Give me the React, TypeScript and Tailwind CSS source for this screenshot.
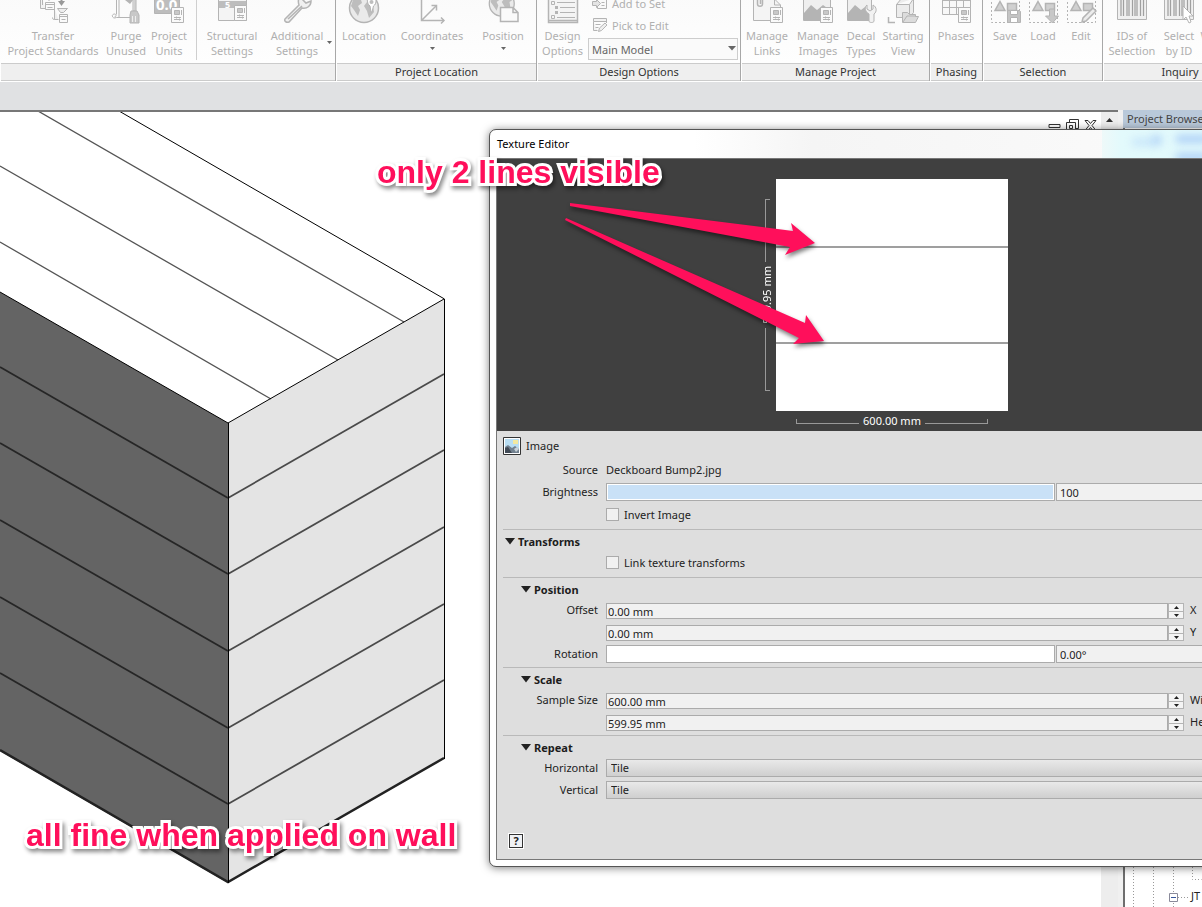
import type { ReactNode } from "react";

const LEFT_FACE_JOINTS = [498, 574, 651, 728, 804];

const PINK = "#ff0f5b";

export default function App() {
  return (
    <div className="relative flex h-screen flex-col overflow-hidden bg-white font-['Noto_Sans','Open_Sans',sans-serif] text-[11px] leading-[15px] text-[#222]">
      <Ribbon />
      <div className="h-7 shrink-0 bg-[#e0e1e3]" />
      <div className="flex min-h-0 flex-1">
        <ModelView />
        <ProjectBrowser />
      </div>
      <TextureEditor />
      <Annotations />
    </div>
  );
}

/* ---------- Ribbon ---------- */

function Ribbon() {
  return (
    <header className="-mt-2 flex h-[90px] shrink-0 border-b border-white bg-linear-to-b from-[#fafafa] to-white">
      <Panel title="" width="w-[336px]">
        <Tool width="w-[106px]" icon={<TransferIcon />} label={["Transfer", "Project Standards"]} />
        <Tool width="w-10" icon={<PurgeIcon />} label={["Purge", "Unused"]} />
        <Tool width="w-[46px]" icon={<UnitsIcon />} label={["Project", "Units"]} />
        <div className="mx-1 w-px bg-[#cfcfcf]" />
        <Tool width="w-[62px]" icon={<StructuralIcon />} label={["Structural", "Settings"]} />
        <Tool width="w-[68px]" icon={<WrenchIcon />} label={["Additional", "Settings"]} />
        <Caret className="mt-[49px] -ml-1" />
      </Panel>
      <Panel title="Project Location" width="w-[201px]">
        <Tool width="w-14" icon={<GlobePinIcon />} label={["Location"]} />
        <Tool width="w-20" icon={<AxesIcon />} label={["Coordinates"]} menu />
        <Tool width="w-[62px]" icon={<GlobePageIcon />} label={["Position"]} menu />
      </Panel>
      <Panel title="Design Options" width="w-[204px]">
        <Tool width="w-[51px]" icon={<ListIcon />} label={["Design", "Options"]} />
        <div className="flex flex-1 flex-col pr-[2px]">
          <SmallTool label="Add to Set" icon={<AddToSetIcon />} />
          <SmallTool label="Pick to Edit" icon={<PickToEditIcon />} />
          <div className="relative mt-0.5">
            <select
              aria-label="Active design option"
              className="h-[22px] w-full appearance-none border border-[#cdcdcd] bg-[#fafafa] pl-[3px] text-[#666]"
            >
              <option>Main Model</option>
            </select>
            <svg className="pointer-events-none absolute top-2 right-0.5" width="8" height="5">
              <path d="M0 0h8L4 4.500z" fill="#666" />
            </svg>
          </div>
        </div>
      </Panel>
      <Panel title="Manage Project" width="w-[189px]">
        <Tool width="w-[52px]" icon={<LinksIcon />} label={["Manage", "Links"]} />
        <Tool width="w-[50px]" icon={<ImagesIcon />} label={["Manage", "Images"]} />
        <Tool width="w-9" icon={<DecalIcon />} label={["Decal", "Types"]} />
        <Tool width="w-12" icon={<StartingIcon />} label={["Starting", "View"]} />
      </Panel>
      <Panel title="Phasing" width="w-[53px]">
        <Tool width="w-[52px]" icon={<PhasesIcon />} label={["Phases"]} />
      </Panel>
      <Panel title="Selection" width="w-[120px]">
        <Tool width="ml-[3px] w-[38px]" icon={<SaveSetIcon />} label={["Save"]} />
        <Tool width="w-[38px]" icon={<LoadSetIcon />} label={["Load"]} />
        <Tool width="w-[38px]" icon={<EditSetIcon />} label={["Edit"]} />
      </Panel>
      <Panel title="Inquiry" width="w-[154px]">
        <Tool width="w-[58px]" icon={<BarcodeIcon />} label={["IDs of", "Selection"]} />
        <Tool width="w-9" icon={<BarcodePickIcon />} label={["Select", "by ID"]} />
        <Tool width="w-14" icon={<BarcodeIcon />} label={["Warnings"]} />
      </Panel>
    </header>
  );
}

function Panel({ title, width, children }: { title: string; width: string; children: ReactNode }) {
  return (
    <section className={`flex shrink-0 flex-col border-r border-[#a8a8a8] ${width}`}>
      <div className="flex h-[71px] pb-[3px]">{children}</div>
      <h2 className="ml-px h-[18px] border-y border-[#cbcbcb] bg-[#efefef] text-center text-[#333]">
        {title}
      </h2>
    </section>
  );
}

interface ToolProps {
  width: string;
  icon: ReactNode;
  label: string[];
  menu?: boolean;
}

function Tool({ width, icon, label, menu }: ToolProps) {
  return (
    <button
      type="button"
      disabled
      className={`flex shrink-0 flex-col items-center whitespace-nowrap text-[#b0b0b0] ${width}`}
    >
      <svg width="32" height="32" viewBox="0 0 32 32" fill="none" stroke="#b4b4b4" className="mb-1">
        {icon}
      </svg>
      {label.map((line) => (
        <span key={line}>{line}</span>
      ))}
      {menu && <Caret className="mt-1" />}
    </button>
  );
}

function SmallTool({ label, icon }: { label: string; icon: ReactNode }) {
  return (
    <button type="button" disabled className="flex h-[22px] items-center gap-1 pl-1 text-[#b0b0b0]">
      <svg width="16" height="16" viewBox="0 0 16 16" fill="none" stroke="#b4b4b4">
        {icon}
      </svg>
      {label}
    </button>
  );
}

function Caret({ className }: { className: string }) {
  return (
    <svg width="5" height="3" className={`shrink-0 ${className}`}>
      <path d="M0 0h5L2.500 3z" fill="#666" />
    </svg>
  );
}

/* ---------- Ribbon icons, all on a 32px grid ---------- */

function Card({ x, y }: { x: number; y: number }) {
  return (
    <g transform={`translate(${x} ${y})`}>
      <path d="M.5.500h12v15H.500z" fill="#fafafa" />
      <path d="M3.500 3.500h5v4h-5z" fill="#c8c8c8" />
      <path d="M10.500 3v5M3 10.500h7M3 12.500h7M5.500 9.500v2M8.500 11.500v2" />
    </g>
  );
}

function AddToSetIcon() {
  return (
    <>
      <path d="M5.500 5V1.500h9v12h-9V12M8 4.500h4M9.500 7.500h3M9.500 10.500h3" fill="#fafafa" />
      <path d="M.5 6.500h4v-2l4 4-4 4v-2h-4z" fill="#e4e4e4" />
    </>
  );
}

function PickToEditIcon() {
  return (
    <>
      <path d="M1.500 1.500h13v3h-13zM1.500 4.500v9h4M14.500 4v2" fill="#f2f2f2" />
      <path d="M3.500 7.500h5M3.500 10.500h3" />
      <path d="M6.500 14.500l1-3.500 5.500-5 2 2-5.500 5.500z" fill="#eee" />
    </>
  );
}

function TransferIcon() {
  return (
    <>
      <path d="M3.500 1v15.500h5M5.500 1v12M12 1v8" fill="#f2f2f2" />
      <path d="M8.500 10.500h9v7h-9zM9 12.500h8M10.500 15.500h5" fill="#fafafa" />
      <path d="M24.500 2v8" strokeWidth="2" stroke="#999" />
      <path d="M21 9h7l-3.500 5z" fill="#999" stroke="none" />
      <path d="M20.500 16.500h10l-4 4h-3zM17.500 16.500v11h4M15.500 25.500c0 2 1 2 2 2" fill="#eee" />
      <path d="M22.500 22.500h8v8h-8zM23 24.500h7M24.500 27.500h4" fill="#fafafa" />
    </>
  );
}

function PurgeIcon() {
  return (
    <>
      <path d="M6.500 0v22.500M6.500 25.500H26V0M6.500 25.500c-4 2-6-3-2-3.500 2 0 2 3 0 3M9 0v25" fill="none" />
      <path d="M15 8h8l-3 4z" fill="#b4b4b4" stroke="none" />
      <path d="M23 8v11h2V8" fill="#eee" />
      <path d="M21 19h6l2 4v8h-9v-8z" fill="#c8c8c8" />
      <path d="M22.500 24v6M25.500 24v6" stroke="#eee" />
    </>
  );
}

function UnitsIcon() {
  return (
    <>
      <path d="M1.500 0h25v21.500h-25z" fill="#bdbdbd" />
      <text x="3" y="18" fill="#fff" stroke="none" fontSize="15" fontWeight="700">
        0.0
      </text>
      <Card x={18} y={15} />
    </>
  );
}

function StructuralIcon() {
  return (
    <>
      <path d="M2.500 0h28v28.500h-28z" fill="#f4f4f4" />
      <path d="M3 9h27v7H3z" fill="#bdbdbd" stroke="none" />
      <text x="9" y="16" fill="#fff" stroke="none" fontSize="9" fontWeight="700">
        5
      </text>
      <Card x={18} y={13} />
    </>
  );
}

function WrenchIcon() {
  return (
    <path
      d="M4 27L18 13C16 7 19 3 24 3l-2 5 3 3 5-2c0 5-4 8-9 7L8 30c-3 1-5-1-4-3zM7 27L21 14"
      fill="#f0f0f0"
      strokeWidth="1.500"
    />
  );
}

function Globe() {
  return (
    <>
      <circle cx="16" cy="16" r="14.500" fill="#eaeaea" strokeWidth="1.500" />
      <path
        d="M5 8c3-5 8-5 10-4l-2 4 1 3-4 3 2 4-2 6-4-6-3-4zM18 3l7 3 3 6-3 2 1 6-5 6-2-7-3-5 3-4z"
        fill="#bdbdbd"
        stroke="none"
      />
    </>
  );
}

function GlobePinIcon() {
  return (
    <>
      <Globe />
      <path d="M23.500 5c5 0 6 6 2 9l-1.500 6h-1l-1-6c-4-3-3-9 1.500-9z" fill="#fff" />
      <circle cx="23.500" cy="10" r="2" fill="#bdbdbd" stroke="none" />
    </>
  );
}

function AxesIcon() {
  return (
    <>
      <path d="M5.500 4v24.500H28M6 28L20 14" strokeWidth="1.500" />
      <path d="M15.500 13.500h5v5M25 25.500l3 3-3 3" strokeWidth="1.500" />
    </>
  );
}

function GlobePageIcon() {
  return (
    <>
      <g transform="translate(1 -2) scale(.86)">
        <Globe />
      </g>
      <path d="M13.500 15.500H26l5 5v9H13.500zM26 15.500v5h5" fill="#fafafa" strokeWidth="1.500" />
    </>
  );
}

function ListIcon() {
  return (
    <>
      <path d="M1.500 0h29v30.500h-29zM1 28.500h30" fill="#f4f4f4" strokeWidth="1.500" />
      <path d="M4.500 9.500h3v3h-3zM4.500 23.500h3v3h-3zM10 10.500h18M13 15.500h15M13 20.500h15M10 25.500h18" />
      <path d="M8 14h3v3H8zM8 19h3v3H8z" fill="#b4b4b4" stroke="none" />
    </>
  );
}

function LinksIcon() {
  return (
    <>
      <path d="M2.500 0v28.500h27V13l-6-6h-4V0M23.500 7v6h6" fill="#f4f4f4" />
      <path d="M6.500 3v9c0 3 5 3 5 0V3M9.500 12V5" strokeWidth="1.500" />
      <Card x={19} y={15} />
    </>
  );
}

function ImagesIcon() {
  return (
    <>
      <path d="M1.500 0h27v28.500h-27z" fill="#efefef" />
      <path d="M2 21l7-8 6 5 6-5 7 5v10H2z" fill="#b4b4b4" stroke="none" />
      <Card x={18} y={15} />
    </>
  );
}

function DecalIcon() {
  return (
    <>
      <path d="M2.500 0h24v28.500h-24z" fill="#efefef" />
      <path d="M3 21l7-8 6 5 4-3 6 5v8H3z" fill="#b4b4b4" stroke="none" />
      <path
        d="M22 13v4l3 2 3-2v-4c4 2 4 7 1 9v7c0 2-5 2-5 0v-7c-4-2-5-7-2-9z"
        fill="#f2f2f2"
      />
    </>
  );
}

function StartingIcon() {
  return (
    <>
      <path d="M9.500 12.500l5-6h12v14l-4 5h-13zM9.500 12.500h13l4-6M22.500 12.500v12" fill="#ececec" />
      <path d="M1.500 25v5.500H8M1.500 2v3" strokeWidth="1.500" />
      <path d="M15.500 30.500v-10h5l2 2h6v2h3l-3 6zM16 30l4-6h9" fill="#dcdcdc" />
    </>
  );
}

function PhasesIcon() {
  return (
    <>
      <path
        d="M2.500 0v22.500h28V0M2 8.500h28M2 15.500h28M9.500 0v22M16.500 0v22M23.500 0v22"
        fill="#f8f8f8"
      />
      <Card x={18} y={15} />
    </>
  );
}

function SetFrame() {
  return (
    <>
      <path d="M2.500 2v28.500h28V2" strokeDasharray="2 2" />
      <path d="M11 9.500l5 9H6zM18.500 11.500h9v7h-9z" fill="#d0d0d0" strokeWidth="1.500" />
    </>
  );
}

function SaveSetIcon() {
  return (
    <>
      <SetFrame />
      <path d="M18.500 18.500h12l1 1v11h-13z" fill="#c4c4c4" />
      <path d="M21.500 18.500h7v4h-7zM21.500 25.500h7v5h-7z" fill="#fff" />
    </>
  );
}

function LoadSetIcon() {
  return (
    <>
      <SetFrame />
      <path d="M22.500 17v7h-4l7 7 6-7h-4v-7z" fill="#c8c8c8" />
    </>
  );
}

function EditSetIcon() {
  return (
    <>
      <SetFrame />
      <path d="M17 30l1-4 10-10 3 3-10 10z" fill="#ececec" strokeWidth="1.500" />
    </>
  );
}

function BarcodeIcon() {
  return (
    <>
      <path d="M1.500 0h29v27.500h-29z" fill="#f0f0f0" />
      <path
        d="M5 0v24M7.500 0v24M11 0v24M13 0v24M16.500 0v24M19 0v24M21 0v24M24.500 0v24M27.500 0v24"
        strokeWidth="1.250"
        stroke="#a0a0a0"
      />
    </>
  );
}

function BarcodePickIcon() {
  return (
    <>
      <BarcodeIcon />
      <path d="M20 14v14l3-3 3 6 2-1-2-6h4z" fill="#fff" />
    </>
  );
}

/* ---------- Workspace ---------- */

function ModelView() {
  return (
    <main className="flex min-w-0 flex-1 border-t-2 border-[#777] bg-white">
      <svg
        viewBox="0 112 460 795"
        width="460"
        height="795"
        className="shrink-0"
        role="img"
        aria-label="Wall model"
      >
        <path d="M0 80H65L444 299 228 423 0 292z" fill="#fff" />
        <path d="M0 292L228 423V883L0 751z" fill="#646464" />
        <path d="M228 423L444 299V759L228 883z" fill="#e4e4e4" />
        <path d="M38 111L404 322M0 166L338 360M0 242L271 399" stroke="#555" strokeWidth="1.300" />
        {LEFT_FACE_JOINTS.map((y) => (
          <g key={y} strokeWidth="1.800">
            <path d={`M0 ${y - 131}L228 ${y}`} stroke="#262626" />
            <path d={`M228 ${y}L444 ${y - 124}`} stroke="#4a4a4a" />
          </g>
        ))}
        <path d="M0 750L228 882 444 758" stroke="#222" strokeWidth="2.500" fill="none" />
        <path
          d="M119 111L444.500 299V759M0 292L228 423 444 299M228.500 423V883"
          stroke="#000"
          fill="none"
        />
      </svg>
      <div className="flex flex-1 justify-end gap-[5px] pt-[7px] pr-1">
        <WindowButton label="Minimize">
          <path d="M1 5.500h11v3H1z" />
        </WindowButton>
        <WindowButton label="Restore">
          <path d="M3.500 3V.500h9v9H10M.500 3.500h9v9h-9zM3.500 6.500h3v3h-3z" />
        </WindowButton>
        <WindowButton label="Close">
          <path d="M1 1.500h3l2.500 3 2.500-3h3l-4 5 4 5H9l-2.500-3-2.500 3H1l4-5z" />
        </WindowButton>
      </div>
      <div className="flex w-[17px] shrink-0 justify-center bg-[#ededed] pt-1.5">
        <svg width="7" height="4">
          <path d="M0 4h7L3.500 0z" fill="#333" />
        </svg>
      </div>
    </main>
  );
}

function WindowButton({ label, children }: { label: string; children: ReactNode }) {
  return (
    <button type="button" aria-label={label} className="size-[13px]">
      <svg width="13" height="13" viewBox="0 0 13 13" fill="#fff" stroke="#333">
        {children}
      </svg>
    </button>
  );
}

function ProjectBrowser() {
  return (
    <aside className="flex w-[84px] shrink-0 flex-col border-l-[5px] border-[#f0f0f0] bg-white">
      <h2 className="h-[18px] shrink-0 overflow-hidden bg-[#b9c9da] pl-1 leading-[18px] whitespace-nowrap text-[#444]">
        Project Browser
      </h2>
      <div className="flex flex-1 items-end border-l-2 border-[#6e6e6e]">
        <svg width="66" height="46" viewBox="0 0 66 46" fill="none" className="shrink-0">
          <g stroke="#999" strokeDasharray="1 2">
            <path d="M8.500 0v46M28.500 0v46M48.500 0v46M53 36.500h12" />
          </g>
          <path d="M44.500 32.500h8v8h-8z" fill="#fff" stroke="#8a8a9a" />
          <path d="M46 36.500h5" stroke="#35559a" />
        </svg>
        <div className="flex h-[46px] flex-col justify-between pb-1">
          <svg width="12" height="20" viewBox="0 0 12 20" fill="none" className="-ml-px">
            <path d="M2.500 6v12.500h9" stroke="#999" strokeDasharray="1 2" />
          </svg>
          <span>JT</span>
        </div>
      </div>
    </aside>
  );
}

/* ---------- Texture editor dialog ---------- */

function TextureEditor() {
  return (
    <div
      role="dialog"
      aria-labelledby="texture-title"
      className="absolute top-[129px] left-[489px] flex w-[806px] flex-col rounded-[7px] border border-[#555] bg-white px-1.5 pb-1.5 leading-[14px] shadow-[0_1px_8px_rgba(0,0,0,0.5)]"
    >
      <div className="relative flex h-7 items-center overflow-hidden bg-linear-to-r from-white from-25% via-[#f5f5f5] via-40% to-[#fcfcfc]">
        <h1 id="texture-title" className="pl-px text-black">
          Texture Editor
        </h1>
        <div className="absolute inset-y-0 right-0 left-[606px] bg-linear-to-r from-[#eef9f9] from-0% to-[#e3fafc] to-10%" />
        <div className="absolute top-2 left-[636px] h-2 w-6 bg-[#c8e6fa] blur-xs" />
        <div className="absolute top-1.5 left-[657px] h-2 w-2 bg-[#aacdf8] blur-xs" />
        <div className="absolute top-1.5 left-[680px] h-1.5 w-8 bg-[#9dc3f6] blur-xs" />
        <div className="absolute top-6 left-[680px] h-1.5 w-8 bg-[#9dc3f6] blur-xs" />
      </div>
      <div className="border border-[#777] bg-[#dedede]">
        <Preview />
        <TextureForm />
      </div>
    </div>
  );
}

function Preview() {
  return (
    <div className="grid h-[272px] grid-cols-[18px_232px_18px] grid-rows-[232px_20px] justify-center bg-[#404040] pt-5 text-white">
      <div className="flex flex-col items-center gap-1 py-5">
        <div className="w-[5px] flex-1 border-t border-l border-[#999]" />
        <span className="rotate-180 [writing-mode:vertical-rl]">599.95 mm</span>
        <div className="w-[5px] flex-1 border-b border-l border-[#999]" />
      </div>
      <div className="flex flex-col bg-white">
        <div className="box-content h-[67px] border-b-2 border-[#9f9f9f]" />
        <div className="box-content h-[94px] border-b-2 border-[#9f9f9f]" />
      </div>
      <div className="col-start-2 flex items-center gap-1 px-5">
        <div className="h-[5px] flex-1 border-b border-l border-[#999]" />
        <span>600.00 mm</span>
        <div className="h-[5px] flex-1 border-r border-b border-[#999]" />
      </div>
    </div>
  );
}

function TextureForm() {
  return (
    <form className="px-1.5 pt-0.5 pb-[11px]">
      <div className="flex h-[26px] items-center gap-[5px]">
        <svg width="18" height="18" viewBox="0 0 18 18">
          <path d="M.5.500h17v17H.500z" fill="#fff" stroke="#333" />
          <path d="M2 2h14v14H2z" fill="#b9def3" />
          <path d="M10 3h5v4h-5z" fill="#f3e9a0" />
          <path d="M2 10l3-2 4 3 3-2 4 3v4H2z" fill="#71808f" />
          <path d="M2 11l3-1 4 6H2z" fill="#414b57" />
          <path d="M11 12l3-2 2 2-3 3z" fill="#c8d2da" />
        </svg>
        Image
      </div>
      <div className="flex h-[22px] items-center">
        <span className="w-[95px] text-right">Source</span>
        <span className="pl-2">Deckboard Bump2.jpg</span>
      </div>
      <div className="flex h-[22px] items-center">
        <SliderRow id="brightness" label="Brightness" amount={100} value="100" />
      </div>
      <CheckRow id="invert" label="Invert Image" className="h-6" />

      <section className="mt-0.5">
        <SectionTitle>Transforms</SectionTitle>
        <CheckRow id="link" label="Link texture transforms" className="h-5" />
      </section>

      <section className="mt-1">
        <SectionTitle nested>Position</SectionTitle>
        <div className="pt-0.5 pb-1">
          <SpinRow id="offset-x" label="Offset" value="0.00 mm" suffix="X" />
          <div className="h-1.5" />
          <SpinRow id="offset-y" value="0.00 mm" suffix="Y" />
          <div className="h-1" />
          <SliderRow id="rotation" label="Rotation" amount={0} value="0.00°" />
        </div>
      </section>

      <section>
        <SectionTitle nested>Scale</SectionTitle>
        <div className="pt-0.5 pb-1">
          <SpinRow id="size-w" label="Sample Size" value="600.00 mm" suffix="Width" />
          <div className="h-1.5" />
          <SpinRow id="size-h" value="599.95 mm" suffix="Height" />
        </div>
      </section>

      <section>
        <SectionTitle nested>Repeat</SectionTitle>
        <div className="flex flex-col gap-1">
          <SelectRow id="repeat-h" label="Horizontal" />
          <SelectRow id="repeat-v" label="Vertical" />
        </div>
      </section>

      <button
        type="button"
        className="mt-[35px] ml-1.5 block size-[14px] border border-[#333] bg-[#f0f2f5] text-center text-[11px] leading-3 font-bold outline outline-white"
      >
        ?
      </button>
    </form>
  );
}

function SectionTitle({ nested, children }: { nested?: boolean; children: ReactNode }) {
  return (
    <h2
      className={`flex h-6 items-center gap-[3px] border-t border-[#b9b9b9] leading-[15px] font-bold text-[#1c1c1c] ${nested ? "pl-[18px]" : "pl-0.5"}`}
    >
      <svg width="10" height="7">
        <path d="M0 0h10L5 6.500z" fill="#222" />
      </svg>
      {children}
    </h2>
  );
}

function CheckRow({ id, label, className }: { id: string; label: string; className: string }) {
  return (
    <div className={`flex items-center gap-[5px] pl-[103px] ${className}`}>
      <input
        id={id}
        type="checkbox"
        className="-mt-px size-[13px] appearance-none border border-[#ababab] bg-[#f1f1f1]"
      />
      <label htmlFor={id} className="-mt-px">
        {label}
      </label>
    </div>
  );
}

interface SliderRowProps {
  id: string;
  label: string;
  amount: number;
  value: string;
}

function SliderRow({ id, label, amount, value }: SliderRowProps) {
  return (
    <div className="flex h-[18px] flex-1 items-center gap-px">
      <label htmlFor={id} className="mr-[7px] w-[95px] text-right">
        {label}
      </label>
      <div className="flex h-full w-[449px] border border-[#ababab] bg-white p-px">
        <input
          id={id}
          type="range"
          defaultValue={amount}
          className={`h-full w-full appearance-none [&::-webkit-slider-thumb]:appearance-none ${amount > 0 ? "bg-[#c9e1f7]" : "bg-white"}`}
        />
      </div>
      <input
        aria-label={`${label} value`}
        defaultValue={value}
        className="h-full min-w-0 flex-1 border border-[#ababab] bg-[#f1f1f1] pl-[3px]"
      />
    </div>
  );
}

interface SpinRowProps {
  id: string;
  label?: string;
  value: string;
  suffix: string;
}

function SpinRow({ id, label, value, suffix }: SpinRowProps) {
  return (
    <div className="flex h-4">
      <label htmlFor={id} className="mr-2 w-[95px] text-right">
        {label}
      </label>
      <input
        id={id}
        aria-label={label ? undefined : suffix}
        defaultValue={value}
        className="h-full min-w-0 flex-1 border border-[#ababab] bg-[#f1f1f1] pl-px leading-[15px]"
      />
      <div className="flex w-4 flex-col border border-[#b4b4b4] bg-[#f4f4f4]">
        <button type="button" aria-label={`Increase ${suffix}`} className="flex h-[7px] items-center justify-center">
          <svg width="5" height="3">
            <path d="M0 3h5L2.500 0z" fill="#222" />
          </svg>
        </button>
        <button
          type="button"
          aria-label={`Decrease ${suffix}`}
          className="flex h-[7px] items-center justify-center border-t border-[#b4b4b4]"
        >
          <svg width="5" height="3">
            <path d="M0 0h5L2.500 3z" fill="#222" />
          </svg>
        </button>
      </div>
      <span className="w-[97px] pl-1.5">{suffix}</span>
    </div>
  );
}

function SelectRow({ id, label }: { id: string; label: string }) {
  return (
    <div className="flex h-[18px] items-center">
      <label htmlFor={id} className="mr-2 w-[95px] text-right">
        {label}
      </label>
      <select
        id={id}
        className="h-full flex-1 appearance-none border border-[#ababab] bg-linear-to-b from-[#e9e9e9] to-[#cfcfcf] pl-1"
      >
        <option>Tile</option>
        <option>None</option>
      </select>
    </div>
  );
}

/* ---------- Review marks drawn over the workspace ---------- */

function Annotations() {
  return (
    <>
      <svg
        width="270"
        height="150"
        viewBox="560 200 270 150"
        fill={PINK}
        className="pointer-events-none absolute top-[200px] left-[560px] overflow-visible drop-shadow-[1px_3px_2px_rgba(0,0,0,0.5)]"
      >
        <path d="M570 203L793 231 791 223 815 243 785 255 790 247 570 206z" />
        <path d="M566 218L805 323 806 315 824 341 793 344 799 338 565 220z" />
      </svg>
      <Note className="top-[154px] left-[377px]">only 2 lines visible</Note>
      <Note className="top-[817px] left-[26px]">all fine when applied on wall</Note>
    </>
  );
}

function Note({ className, children }: { className: string; children: ReactNode }) {
  return (
    <p
      className={`pointer-events-none absolute font-['Liberation_Sans',sans-serif] text-[32px] leading-9 font-bold whitespace-nowrap text-[#ff0f5b] drop-shadow-[2px_3px_2px_rgba(0,0,0,0.45)] [-webkit-text-stroke:6px_white] [paint-order:stroke_fill] ${className}`}
    >
      {children}
    </p>
  );
}
